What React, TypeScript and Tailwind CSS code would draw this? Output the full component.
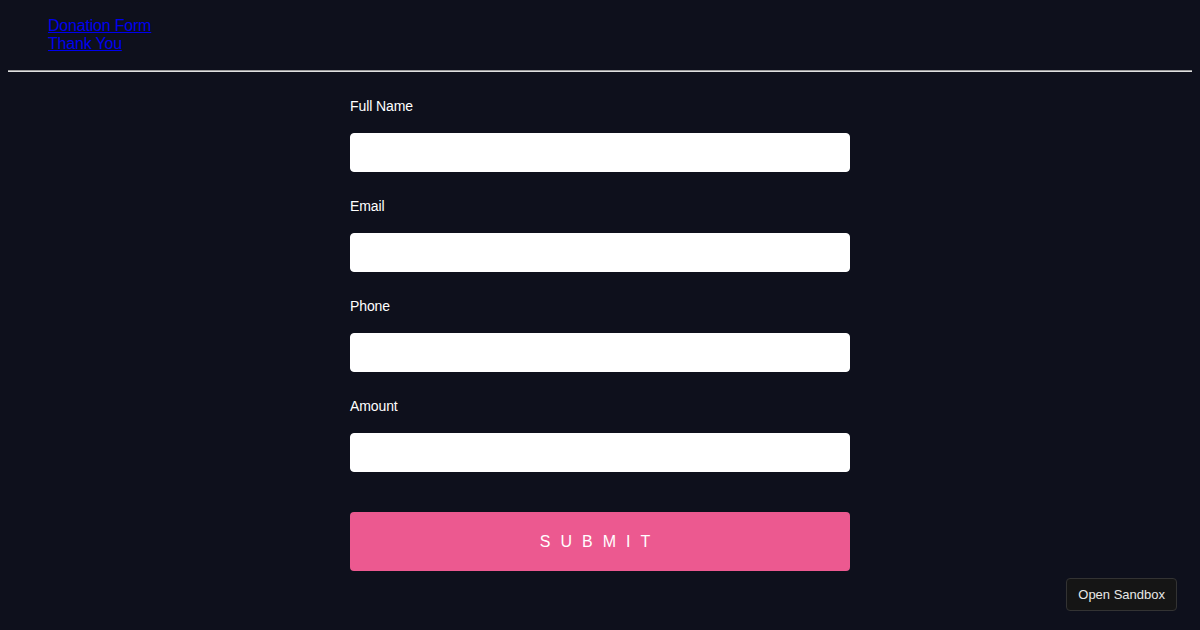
import React from "react";

export default function App() {
  const fields = ["Full Name", "Email", "Phone", "Amount"];
  return (
    <div
      className="min-h-screen bg-[#0e101c] px-2 pt-[17px] pb-8"
      style={{ fontFamily: '"Liberation Sans", Arial, sans-serif' }}
    >
      <ul className="pl-10 text-[16px] leading-[18px] tracking-[-0.2px]">
        <li>
          <a href="#" className="text-[#0000ee] underline [text-decoration-line:underline] decoration-[#0000ee]">
            Donation Form
          </a>
        </li>
        <li>
          <a href="#" className="text-[#0000ee] underline [text-decoration-line:underline] decoration-[#0000ee]">
            Thank You
          </a>
        </li>
      </ul>
      <hr className="mt-[17px] h-0 border-0 border-t border-b border-t-[#9a9a9a] border-b-[#e0e0e0]" />
      <form className="mx-auto max-w-[500px]" onSubmit={(e) => e.preventDefault()}>
        {fields.map((f) => (
          <div key={f}>
            <label className="block mt-5 mb-[13px] leading-[28px] text-[14px] font-extralight text-white tracking-[-0.1px]">
              {f}
            </label>
            <input
              className="block w-full h-[39px] rounded bg-white border border-white px-[15px] py-[10px] mb-[10px] text-[14px] leading-[17px] outline-none"
              type="text"
            />
          </div>
        ))}
        <button
          type="submit"
          className="block w-full mt-10 py-5 rounded bg-[#ec5990] text-white text-[16px] leading-[19px] tracking-[10px] uppercase font-thin"
        >
          Submit
        </button>
      </form>
      <button className="fixed bottom-[19px] right-[23px] h-[33px] px-[11px] rounded bg-[#151515] border border-[#333333] text-[13px] text-[#e8e8e8]">
        Open Sandbox
      </button>
    </div>
  );
}
